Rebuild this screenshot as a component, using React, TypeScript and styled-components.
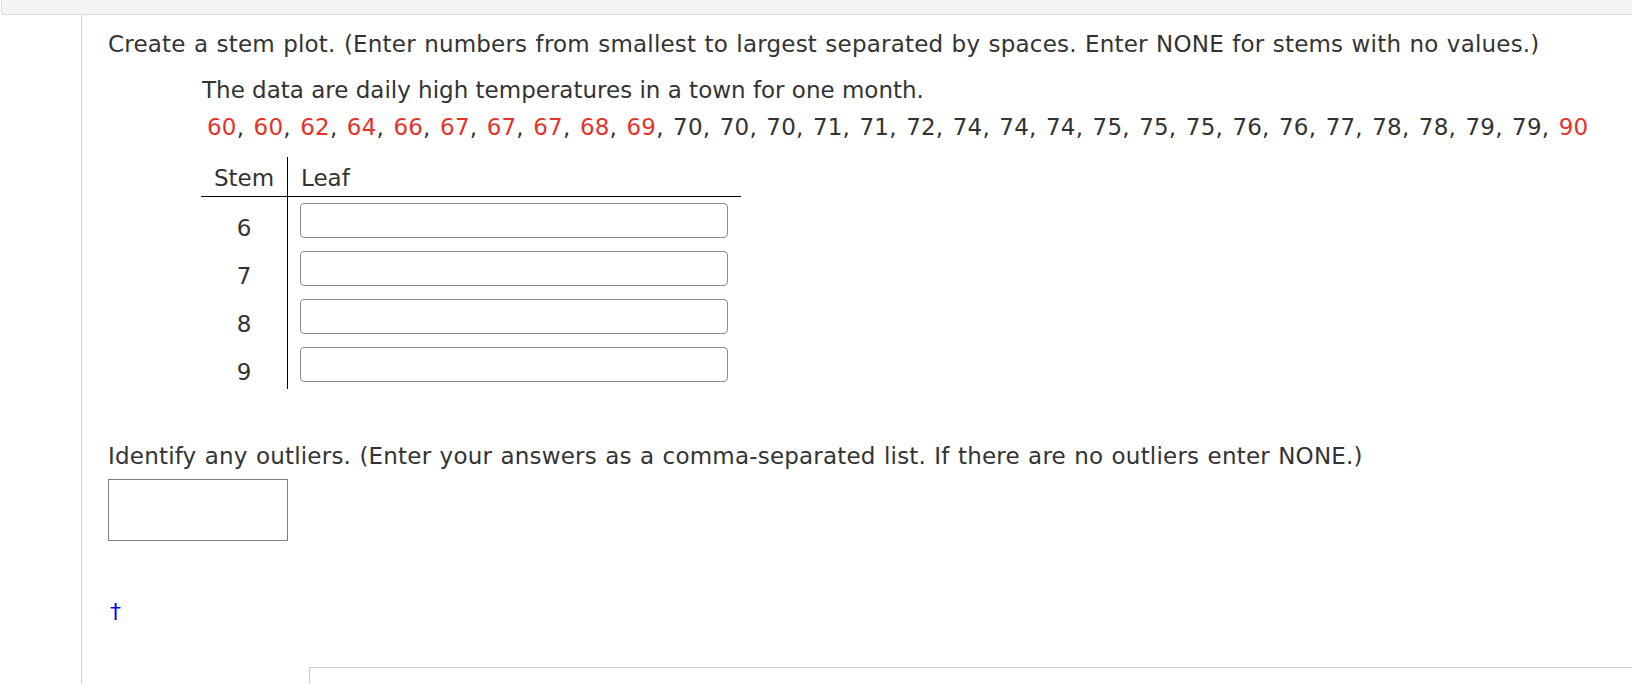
import { FC, Fragment } from "react";
import styled, { createGlobalStyle } from "styled-components";

const GlobalStyle = createGlobalStyle`
    html, body {
        margin: 0;
        padding: 0;
        background: #fff;
        overflow: hidden;
    }
    body {
        font-family: "DejaVu Sans", Verdana, sans-serif;
        color: #333;
    }
`;

const Page = styled.div`
    width: 1632px;
    height: 684px;
    display: flex;
    flex-direction: column;
`;

const TopBar = styled.div`
    flex: none;
    height: 14px;
    margin-left: 1px;
    background: #f5f5f5;
    border-left: 1px solid #dcdcdc;
    border-bottom: 1px solid #dcdcdc;
    border-bottom-left-radius: 4px;
`;

const Main = styled.main`
    flex: 1;
    margin-left: 81px;
    border-left: 1px solid #cfcfcf;
    padding: 14px 0 0 26px;
    display: flex;
    flex-direction: column;
`;

const Prompt = styled.p<{ $gap?: number }>`
    margin: ${p => p.$gap ?? 0}px 0 0;
    font-size: 23px;
    line-height: 30px;
    letter-spacing: 0.2px;
    word-spacing: 0.8px;
    white-space: nowrap;
`;

const Indent = styled.div`
    margin: 13px 0 0 94px;
    font-size: 23px;
    line-height: 37px;
`;

const DataLine = styled.div`
    padding-left: 5px;
    letter-spacing: 0.2px;
    word-spacing: 1.9px;
    white-space: nowrap;
`;

const Num = styled.span<{ $red?: boolean }>`
    color: ${p => (p.$red ? "#e5332a" : "#333")};
`;

const StemTable = styled.div`
    margin: 11px 0 0 -1px;
    width: 540px;
    display: grid;
    grid-template-columns: 87px 453px;
`;

const HeadCell = styled.div<{ $stem?: boolean }>`
    height: 40px;
    padding-top: 1px;
    box-sizing: border-box;
    line-height: 40px;
    font-size: 23px;
    border-bottom: 1px solid #000;
    text-align: ${p => (p.$stem ? "center" : "left")};
    padding-left: ${p => (p.$stem ? 0 : 13)}px;
    border-right: ${p => (p.$stem ? "1px solid #000" : "none")};
`;

const StemCell = styled.div`
    height: 48px;
    box-sizing: border-box;
    padding-top: 18px;
    line-height: 26px;
    font-size: 23px;
    text-align: center;
    border-right: 1px solid #000;
`;

const LeafCell = styled.div`
    height: 48px;
    box-sizing: border-box;
    padding: 6px 13px 0 12px;
`;

const LeafInput = styled.input`
    display: block;
    width: 428px;
    height: 35px;
    box-sizing: border-box;
    margin: 0;
    border: 1px solid #8d8d8d;
    border-radius: 4px;
    background: #fff;
    font: 20px "DejaVu Sans", Verdana, sans-serif;
    padding: 0 6px;
`;

const AnswerInput = styled.input`
    display: block;
    width: 180px;
    height: 62px;
    box-sizing: border-box;
    margin: 8px 0 0;
    border: 1px solid #808080;
    border-radius: 0;
    background: #fff;
    font: 20px "DejaVu Sans", Verdana, sans-serif;
    padding: 0 6px;
`;

const Dagger = styled.div`
    margin: 61px 0 0 2px;
    font-size: 22px;
    line-height: 20px;
    color: #0000ff;
`;

const BottomPanel = styled.div`
    margin: auto 0 0 201px;
    height: 17px;
    box-sizing: border-box;
    border-top: 1px solid #cccccc;
    border-left: 1px solid #cccccc;
`;

const data = [
    60, 60, 62, 64, 66, 67, 67, 67, 68, 69, 70, 70, 70, 71, 71, 72, 74, 74, 74,
    75, 75, 75, 76, 76, 77, 78, 78, 79, 79, 90,
];

const stems = [6, 7, 8, 9];

const App: FC = () => {
    return (
        <>
            <GlobalStyle />
            <Page>
                <TopBar />
                <Main>
                    <Prompt>
                        Create a stem plot. (Enter numbers from smallest to largest separated by spaces. Enter NONE for stems with no values.)
                    </Prompt>
                    <Indent>
                        <div>The data are daily high temperatures in a town for one month.</div>
                        <DataLine>
                            {data.map((n, i) => (
                                <span key={i}>
                                    <Num $red={n < 70 || n >= 90}>{n}</Num>
                                    {i < data.length - 1 ? ", " : ""}
                                </span>
                            ))}
                        </DataLine>
                        <StemTable>
                            <HeadCell $stem>Stem</HeadCell>
                            <HeadCell>Leaf</HeadCell>
                            {stems.map(s => (
                                <Fragment key={s}>
                                    <StemCell>{s}</StemCell>
                                    <LeafCell>
                                        <LeafInput type="text" />
                                    </LeafCell>
                                </Fragment>
                            ))}
                        </StemTable>
                    </Indent>
                    <Prompt $gap={52}>
                        Identify any outliers. (Enter your answers as a comma-separated list. If there are no outliers enter NONE.)
                    </Prompt>
                    <AnswerInput type="text" />
                    <Dagger>†</Dagger>
                    <BottomPanel />
                </Main>
            </Page>
        </>
    );
};

export default App;
